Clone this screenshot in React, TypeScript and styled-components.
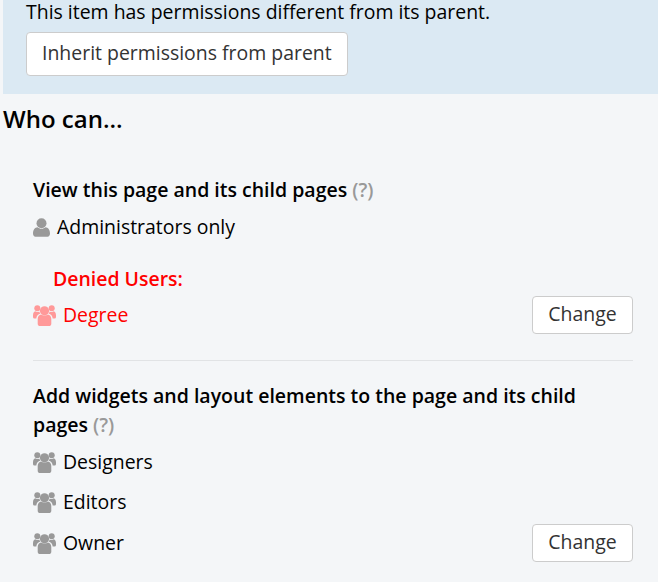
import React from "react";
import styled, { createGlobalStyle } from "styled-components";

const GlobalStyle = createGlobalStyle`
  html, body {
    margin: 0;
    padding: 0;
    height: 100%;
    overflow: hidden;
    background: #f4f6f8;
  }
  body {
    font-family: "Open Sans", "Liberation Sans", sans-serif;
    font-size: 19.45px;
    color: #000;
  }
`;

const UserIcon = () => (
  <svg width="17" height="19" viewBox="0 0 17 19" fill="currentColor">
    <circle cx="8.5" cy="5.2" r="5" />
    <path d="M0 15.500c0-4 2-6 4.500-6.300 1 .9 2.500 1.500 4 1.500s3-.6 4-1.500C15 9.500 17 11.500 17 15.500c0 2-1 3.200-2.500 3.200h-12C1 18.700 0 17.500 0 15.500z" />
  </svg>
);

const GroupIcon = () => (
  <svg width="23" height="21" viewBox="0 0 23 21" fill="currentColor">
    <circle cx="11.500" cy="5.800" r="4.600" />
    <circle cx="4.300" cy="3.300" r="3" />
    <circle cx="18.700" cy="3.300" r="3" />
    <path d="M4.700 14c0-3 1.700-4.300 3.300-4.600 1 .7 2.200 1.100 3.500 1.100s2.500-.4 3.500-1.100c1.600.3 3.300 1.600 3.300 4.600v4.700c0 1.500-1 2.300-2.300 2.300H7c-1.300 0-2.300-.8-2.300-2.300z" />
    <path d="M0 10.300c0-2.300 1-3.700 2.200-4 .6.500 1.300.8 2.100.8.700 0 1.300-.2 1.900-.6.300.9.800 1.600 1.300 2.100C5 9.300 3.500 11 3.300 13.600H1.500C.5 13.600 0 13 0 12.100z" />
    <path d="M23 10.300c0-2.300-1-3.700-2.200-4-.6.500-1.300.8-2.100.8-.7 0-1.300-.2-1.900-.6-.3.9-.8 1.600-1.300 2.100 2.500.7 4 2.400 4.200 5h1.800c1 0 1.500-.6 1.500-1.500z" />
  </svg>
);

const Page = styled.div`
  width: 658px;
  height: 582px;
  box-sizing: border-box;
  padding-left: 3px;
  overflow: hidden;
`;

const Banner = styled.div`
  background: #dbe9f3;
  height: 94px;
  box-sizing: border-box;
  padding: 0 0 0 23px;
  display: flex;
  flex-direction: column;
  align-items: flex-start;
`;

const BannerText = styled.div`
  line-height: 24px;
  height: 32px;
`;

const Button = styled.button`
  font: inherit;
  color: #333;
  background: #fff;
  border: 1px solid #ccc;
  border-radius: 4px;
  height: 38px;
  padding: 0 15px 2px;
  line-height: 1;
  cursor: pointer;
`;

const InheritButton = styled(Button)`
  height: 44px;
`;

const Heading = styled.h3`
  margin: 0;
  font-size: 24px;
  font-weight: 600;
  line-height: 32px;
  padding-top: 9px;
  height: 59px;
  box-sizing: border-box;
`;

const Section = styled.section`
  padding: 0 25px 0 30px;
  display: flex;
  flex-direction: column;
`;

const Title = styled.div<{ $top: number }>`
  font-size: 19.5px;
  font-weight: 600;
  line-height: 29px;
  margin-top: ${(p) => p.$top}px;
`;

const Hint = styled.span`
  color: #999;
`;

const Row = styled.div<{ $height: number; $denied?: boolean }>`
  display: flex;
  align-items: center;
  height: ${(p) => p.$height}px;
  color: ${(p) => (p.$denied ? "#ff0000" : "#000")};
`;

const IconSlot = styled.span<{ $denied?: boolean }>`
  display: flex;
  color: ${(p) => (p.$denied ? "#ff9999" : "#999")};
  margin: 2px 7px 0 0;
`;

const ChangeButton = styled(Button)`
  margin-left: auto;
  width: 101px;
  padding: 0 0 2px;
`;

const DeniedLabel = styled.div`
  color: #ff0000;
  font-weight: 600;
  padding-left: 20px;
  line-height: 26px;
  margin-top: 18px;
`;

const Divider = styled.hr`
  border: 0;
  border-top: 1px solid #e1e3e5;
  margin: 23px 0 0;
  width: 100%;
`;

const GroupList = styled.div`
  display: flex;
  flex-direction: column;
  margin-top: 2px;
`;

export default function App() {
  return (
    <Page>
      <GlobalStyle />
      <Banner>
        <BannerText>This item has permissions different from its parent.</BannerText>
        <InheritButton>Inherit permissions from parent</InheritButton>
      </Banner>
      <Heading>Who can...</Heading>
      <Section>
        <Title $top={22}>
          View this page and its child pages <Hint>(?)</Hint>
        </Title>
        <Row $height={44}>
          <IconSlot>
            <UserIcon />
          </IconSlot>
          Administrators only
        </Row>
        <DeniedLabel>Denied Users:</DeniedLabel>
        <Row $height={45} $denied>
          <IconSlot $denied>
            <GroupIcon />
          </IconSlot>
          Degree
          <ChangeButton>Change</ChangeButton>
        </Row>
        <Divider />
        <Title $top={20}>
          Add widgets and layout elements to the page and its child pages <Hint>(?)</Hint>
        </Title>
        <GroupList>
          <Row $height={40}>
            <IconSlot>
              <GroupIcon />
            </IconSlot>
            Designers
          </Row>
          <Row $height={41}>
            <IconSlot>
              <GroupIcon />
            </IconSlot>
            Editors
          </Row>
          <Row $height={41}>
            <IconSlot>
              <GroupIcon />
            </IconSlot>
            Owner
            <ChangeButton>Change</ChangeButton>
          </Row>
        </GroupList>
      </Section>
    </Page>
  );
}
